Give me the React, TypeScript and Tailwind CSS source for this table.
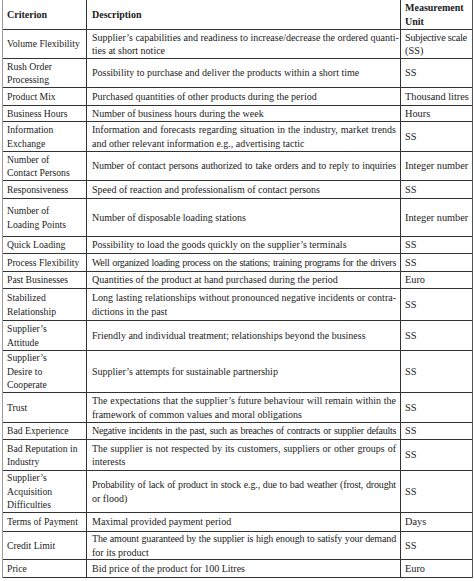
import React from "react";

type Line = string | [string, boolean, number?];
type Row = { h: number; c: string[]; d: Line[]; u: string[] };

const rows: Row[] = [
  { h: 29, c: ["Volume Flexibility"], d: [["Supplier’s capabilities and readiness to increase/decrease the ordered quanti-", true], "ties at short notice"], u: ["Subjective scale", "(SS)"] },
  { h: 29, c: ["Rush Order", "Processing"], d: ["Possibility to purchase and deliver the products within a short time"], u: ["SS"] },
  { h: 18, c: ["Product Mix"], d: ["Purchased quantities of other products during the period"], u: ["Thousand litres"] },
  { h: 16, c: ["Business Hours"], d: ["Number of business hours during the week"], u: ["Hours"] },
  { h: 30, c: ["Information", "Exchange"], d: [["Information and forecasts regarding situation in the industry, market trends", true], "and other relevant information e.g., advertising tactic"], u: ["SS"] },
  { h: 29, c: ["Number of", "Contact Persons"], d: [["Number of contact persons authorized to take orders and to reply to inquiries", true, 1]], u: ["Integer number"] },
  { h: 18, c: ["Responsiveness"], d: ["Speed of reaction and professionalism of contact persons"], u: ["SS"] },
  { h: 38, c: ["Number of", "Loading Points"], d: ["Number of disposable loading stations"], u: ["Integer number"] },
  { h: 17, c: ["Quick Loading"], d: ["Possibility to load the goods quickly on the supplier’s terminals"], u: ["SS"] },
  { h: 18, c: ["Process Flexibility"], d: [["Well organized loading process on the stations; training programs for the drivers", true, 2]], u: ["SS"] },
  { h: 17, c: ["Past Businesses"], d: ["Quantities of the product at hand purchased during the period"], u: ["Euro"] },
  { h: 32, c: ["Stabilized", "Relationship"], d: [["Long lasting relationships without pronounced negative incidents or contra-", true], "dictions in the past"], u: ["SS"] },
  { h: 30, c: ["Supplier’s", "Attitude"], d: ["Friendly and individual treatment; relationships beyond the business"], u: ["SS"] },
  { h: 42, c: ["Supplier’s", "Desire to", "Cooperate"], d: ["Supplier’s attempts for sustainable partnership"], u: ["SS"] },
  { h: 30, c: ["Trust"], d: [["The expectations that the supplier’s future behaviour will remain within the", true], "framework of common values and moral obligations"], u: ["SS"] },
  { h: 17, c: ["Bad Experience"], d: [["Negative incidents in the past, such as breaches of contracts or supplier defaults", true, 2]], u: ["SS"] },
  { h: 31, c: ["Bad Reputation in", "Industry"], d: [["The supplier is not respected by its customers, suppliers or other groups of", true], "interests"], u: ["SS"] },
  { h: 42, c: ["Supplier’s", "Acquisition", "Difficulties"], d: [["Probability of lack of product in stock e.g., due to bad weather (frost, drought", true, 1], "or flood)"], u: ["SS"] },
  { h: 19, c: ["Terms of Payment"], d: ["Maximal provided payment period"], u: ["Days"] },
  { h: 28, c: ["Credit Limit"], d: [["The amount guaranteed by the supplier is high enough to satisfy your demand", true, 1], "for its product"], u: ["SS"] },
  { h: 18, c: ["Price"], d: ["Bid price of the product for 100 Litres"], u: ["Euro"] },
];

export default function App() {
  return (
    <div className="w-[474px] h-[581px] bg-white overflow-hidden font-['Liberation_Serif',serif]">
      <div className="ml-[2px] w-[471px] border-l border-l-[#9a9a9a] border-r border-r-[#555] text-[10px] leading-[13.5px] text-[#1c1c1c]">
        <div className="flex h-[30px] border-b border-[#333] font-bold">
          <div className="w-[84px] border-r border-[#333] pl-[4px] flex items-center">Criterion</div>
          <div className="w-[314px] border-r border-[#333] pl-[5px] flex items-center">Description</div>
          <div className="flex-1 pl-[4px] flex flex-col justify-center">
            <div>Measurement</div>
            <div>Unit</div>
          </div>
        </div>
        {rows.map((r, i) => (
          <div key={i} className="flex border-b border-[#333]" style={{ height: r.h }}>
            <div className="w-[84px] shrink-0 border-r border-[#333] pl-[4px] flex flex-col justify-center text-[9.7px]">
              {r.c.map((t, j) => (
                <div key={j} className="whitespace-nowrap">{t}</div>
              ))}
            </div>
            <div className="w-[314px] shrink-0 border-r border-[#333] pl-[5px] pr-[4px] flex flex-col justify-center">
              {r.d.map((l, j) => {
                const full = Array.isArray(l);
                const t = Array.isArray(l) ? l[0] : l;
                const tight = Array.isArray(l) ? l[2] ?? 0 : 0;
                return (
                  <div
                    key={j}
                    className={
                      (full ? "text-justify [text-align-last:justify] " : "") +
                      (tight === 2 ? "tracking-[-0.3px] " : tight === 1 ? "tracking-[-0.15px] " : "") +
                      "whitespace-nowrap"
                    }
                  >
                    {t}
                  </div>
                );
              })}
            </div>
            <div className="flex-1 pl-[4px] flex flex-col justify-center text-[10.3px]">
              {r.u.map((t, j) => (
                <div key={j} className={"whitespace-nowrap" + (t === "Subjective scale" ? " tracking-[-0.3px]" : "")}>{t}</div>
              ))}
            </div>
          </div>
        ))}
      </div>
    </div>
  );
}
